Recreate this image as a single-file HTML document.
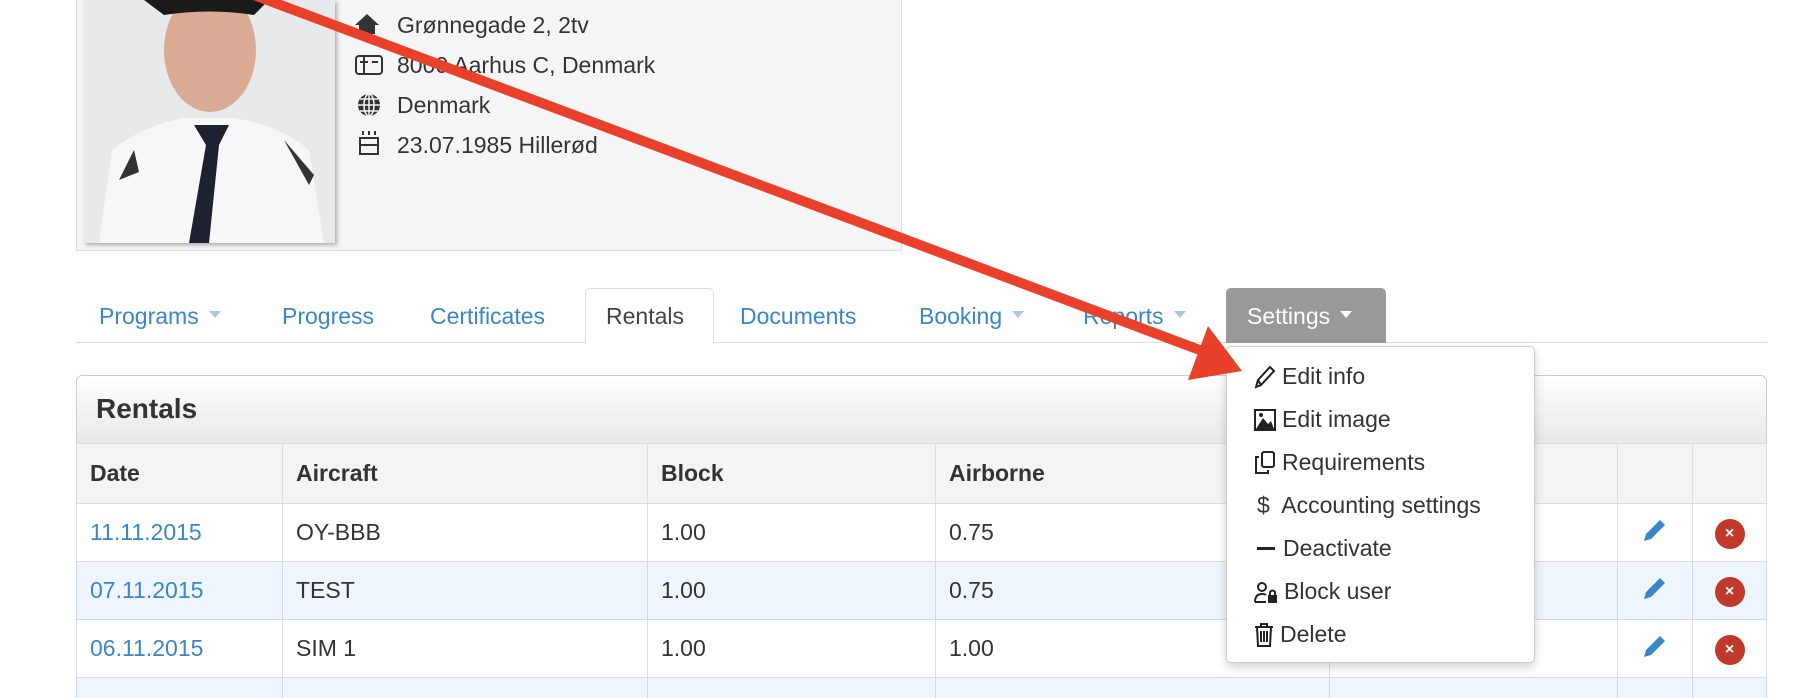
<!DOCTYPE html>
<html><head><meta charset="utf-8"><style>
*{box-sizing:border-box;margin:0;padding:0}
html,body{width:1814px;height:698px;overflow:hidden}
body{background:#fff;font-family:"Liberation Sans",sans-serif;color:#333;position:relative}
.abs{position:absolute}
.prof{left:76px;top:-2px;width:826px;height:253px;background:#f5f5f5;border:1px solid #ddd}
.info{font-size:23px;color:#333}
.tab{position:absolute;top:303px;font-size:23px;color:#3a86c8}
.car{display:inline-block;width:0;height:0;border-left:6px solid transparent;border-right:6px solid transparent;border-top:7px solid #a9c8e6;margin-left:10px;vertical-align:middle;position:relative;top:-3px}
.dd{left:1226px;top:346px;width:309px;height:317px;background:#fff;border:1px solid #ccc;border-radius:5px;box-shadow:0 4px 10px rgba(0,0,0,.18)}
.it{position:absolute;left:27px;font-size:23px;color:#333;display:flex;align-items:center}
.it svg{margin-right:6px}
table{position:absolute;left:76px;top:443px;width:1691px;border-collapse:collapse;font-size:23px}
td{border:1px solid #ddd;padding:0 0 0 13px;height:58px}
th{border:1px solid #ddd;text-align:left;padding-left:13px;height:60px;background:#f4f4f4;font-weight:bold;color:#333}
tr.o td{background:#eef5fc;border-color:#c9dcee}
a{color:#3a86c8;text-decoration:none}
.x{display:inline-block;width:30px;height:30px;border-radius:50%;background:#c0392b;color:#fff;font-size:16px;font-weight:bold;text-align:center;line-height:30px}
</style></head><body>
<div class="abs prof"></div>
<svg class="abs" style="left:84px;top:0;box-shadow:2px 2px 4px rgba(0,0,0,.3)" width="251" height="243" viewBox="0 0 251 243">
<rect width="251" height="243" fill="#e8e9ea"/>
<path d="M15 243 L28 150 Q60 125 100 118 L150 118 Q195 125 225 150 L240 243Z" fill="#f7f7f7"/>
<path d="M50 150 L35 180 L55 172Z M200 140 L230 175 L225 185Z" fill="#333"/>
<path d="M110 125 L122 145 L105 243 L125 243 L135 145 L145 125Z" fill="#1e2230"/>
<ellipse cx="126" cy="50" rx="46" ry="62" fill="#d9ab94"/>
<path d="M60 0 H185 L170 15 Q126 8 80 15Z" fill="#1a1a1a"/>
</svg>
<svg class="abs" style="left:355px;top:13px" width="24" height="22" viewBox="0 0 24 22"><path d="M12 1 L24 12 H20 V21 H4 V12 H0Z" fill="#333"/></svg>
<div class="abs info" style="left:397px;top:12px">Grønnegade 2, 2tv</div>
<svg class="abs" style="left:355px;top:55px" width="28" height="20" viewBox="0 0 28 20"><rect x="1" y="1" width="26" height="18" rx="3" fill="none" stroke="#333" stroke-width="2"/><path d="M9 1 V19 M5 7 H13 M17 7 H23" stroke="#333" stroke-width="2"/></svg>
<div class="abs info" style="left:397px;top:52px">8000 Aarhus C, Denmark</div>
<svg class="abs" style="left:357px;top:93px" width="24" height="24" viewBox="0 0 24 24"><circle cx="12" cy="12" r="11" fill="#333"/><path d="M1 12 H23 M12 1 V23 M3 6 H21 M3 18 H21" stroke="#f5f5f5" stroke-width="1.5"/><ellipse cx="12" cy="12" rx="5" ry="11" fill="none" stroke="#f5f5f5" stroke-width="1.5"/></svg>
<div class="abs info" style="left:397px;top:92px">Denmark</div>
<svg class="abs" style="left:358px;top:130px" width="22" height="26" viewBox="0 0 22 26"><path d="M5 1 V5 M11 1 V5 M17 1 V5" stroke="#333" stroke-width="2"/><rect x="2" y="8" width="18" height="16" fill="none" stroke="#333" stroke-width="2"/><path d="M2 15 H20" stroke="#333" stroke-width="2"/></svg>
<div class="abs info" style="left:397px;top:132px">23.07.1985 Hillerød</div>

<div class="abs" style="left:76px;top:342px;width:1691px;height:1px;background:#ddd"></div>
<div class="abs" style="left:585px;top:288px;width:129px;height:56px;background:#fff;border:1px solid #ddd;border-bottom:none;border-radius:5px 5px 0 0"></div>
<div class="tab" style="left:99px">Programs<span class="car"></span></div>
<div class="tab" style="left:282px">Progress</div>
<div class="tab" style="left:430px">Certificates</div>
<div class="tab" style="left:606px;color:#444">Rentals</div>
<div class="tab" style="left:740px">Documents</div>
<div class="tab" style="left:919px">Booking<span class="car"></span></div>
<div class="tab" style="left:1083px">Reports<span class="car"></span></div>
<div class="abs" style="left:1226px;top:288px;width:160px;height:55px;background:#999;border-radius:5px 5px 0 0;color:#fff;font-size:23px;padding:15px 0 0 21px">Settings<span class="car" style="border-top-color:#fff"></span></div>

<div class="abs" style="left:76px;top:375px;width:1691px;height:69px;border:1px solid #ccc;border-bottom:none;border-radius:6px 6px 0 0;background:linear-gradient(#fff,#e8e8e8)"></div>
<div class="abs" style="left:96px;top:393px;font-size:28px;font-weight:bold;color:#333">Rentals</div>
<table>
<tr><th style="width:206px">Date</th><th style="width:365px">Aircraft</th><th style="width:288px">Block</th><th style="width:394px">Airborne</th><th style="width:288px"></th><th style="width:75px"></th><th></th></tr>
<tr><td><a>11.11.2015</a></td><td>OY-BBB</td><td>1.00</td><td>0.75</td><td></td><td style="text-align:center;padding:0"><svg width="26" height="26" viewBox="0 0 26 26"><path d="M2 24 L4 17 L18 3 L23 8 L9 22Z" fill="#3a86c8"/></svg></td><td style="text-align:center;padding:0"><span class="x">×</span></td></tr>
<tr class="o"><td><a>07.11.2015</a></td><td>TEST</td><td>1.00</td><td>0.75</td><td></td><td style="text-align:center;padding:0"><svg width="26" height="26" viewBox="0 0 26 26"><path d="M2 24 L4 17 L18 3 L23 8 L9 22Z" fill="#3a86c8"/></svg></td><td style="text-align:center;padding:0"><span class="x">×</span></td></tr>
<tr><td><a>06.11.2015</a></td><td>SIM 1</td><td>1.00</td><td>1.00</td><td></td><td style="text-align:center;padding:0"><svg width="26" height="26" viewBox="0 0 26 26"><path d="M2 24 L4 17 L18 3 L23 8 L9 22Z" fill="#3a86c8"/></svg></td><td style="text-align:center;padding:0"><span class="x">×</span></td></tr>
<tr class="o"><td></td><td></td><td></td><td></td><td></td><td></td><td></td></tr>
</table>

<div class="abs dd">
<div class="it" style="top:16px"><svg width="22" height="24" viewBox="0 0 22 24"><path d="M2 22 L4 15 L16 2 L20 6 L7 20Z M4 15 L7 20" fill="none" stroke="#222" stroke-width="2"/></svg>Edit info</div>
<div class="it" style="top:59px"><svg width="22" height="22" viewBox="0 0 22 22"><rect x="1" y="1" width="20" height="20" fill="none" stroke="#222" stroke-width="2"/><path d="M2 20 L9 9 L14 15 L17 12 L20 20Z" fill="#222"/><circle cx="7" cy="6" r="2" fill="#222"/></svg>Edit image</div>
<div class="it" style="top:102px"><svg width="22" height="24" viewBox="0 0 22 24"><rect x="8" y="1" width="12" height="15" rx="2" fill="none" stroke="#222" stroke-width="2"/><path d="M5 6 H2 V22 H14 V19" fill="none" stroke="#222" stroke-width="2"/></svg>Requirements</div>
<div class="it" style="top:145px;left:30px">$&nbsp; Accounting settings</div>
<div class="it" style="top:188px;left:30px"><span style="display:inline-block;width:18px;height:3px;background:#222;margin-right:8px"></span>Deactivate</div>
<div class="it" style="top:231px"><svg width="24" height="24" viewBox="0 0 24 24"><circle cx="8" cy="7" r="4" fill="none" stroke="#222" stroke-width="2"/><path d="M1 22 Q1 14 8 14 Q11 14 12 15 M1 22 H12" fill="none" stroke="#222" stroke-width="2"/><rect x="14" y="15" width="9" height="8" fill="#222"/><path d="M16 15 V12 Q18.5 9 21 12 V15" fill="none" stroke="#222" stroke-width="2"/></svg>Block user</div>
<div class="it" style="top:274px"><svg width="20" height="24" viewBox="0 0 20 24"><path d="M1 4 H19 M7 4 V1 H13 V4 M3 4 L4 23 H16 L17 4 M7 8 V19 M10 8 V19 M13 8 V19" fill="none" stroke="#222" stroke-width="2"/></svg>Delete</div>
</div>

<svg class="abs" style="left:0;top:0" width="1814" height="698"><line x1="254" y1="-5" x2="1205" y2="352" stroke="#e8402a" stroke-width="10"/><path d="M1242 371 L1188 380 L1208 326Z" fill="#e8402a"/></svg>
</body></html>
